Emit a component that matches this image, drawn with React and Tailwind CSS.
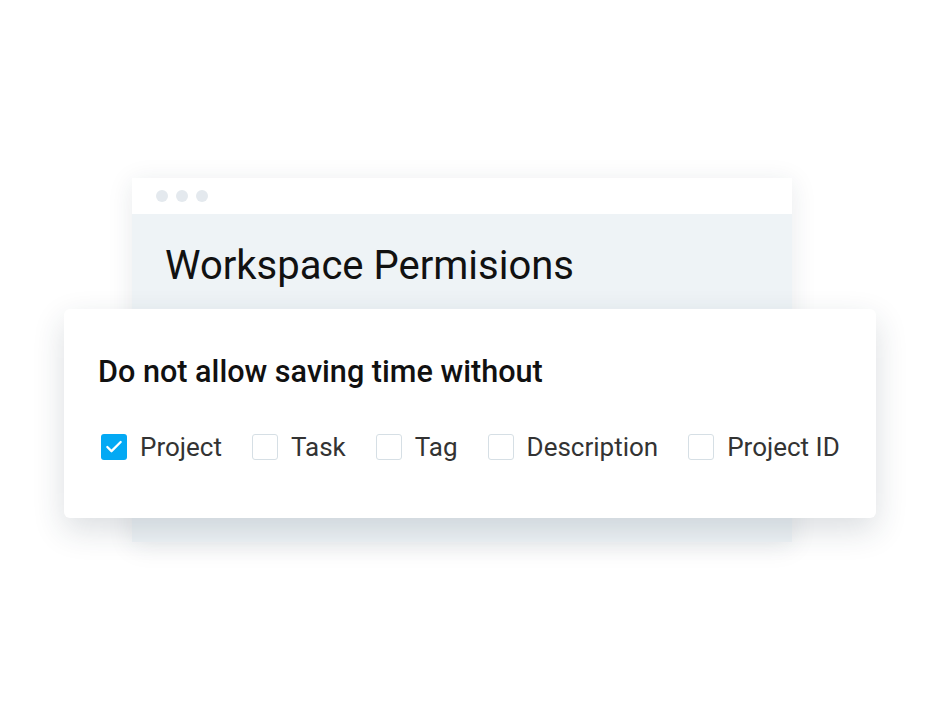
import { Check } from 'lucide-react';

const options = [
  { label: 'Project', checked: true },
  { label: 'Task' },
  { label: 'Tag' },
  { label: 'Description' },
  { label: 'Project ID' },
];

function Box({ checked }) {
  if (checked) {
    return (
      <span className="w-[26px] h-[26px] rounded-[3px] bg-[#03a9f4] flex items-center justify-center flex-shrink-0">
        <Check className="w-[20px] h-[20px] text-white" strokeWidth={2.75} />
      </span>
    );
  }
  return <span className="w-[26px] h-[26px] rounded-[3px] border border-[#d6dfe5] bg-white flex-shrink-0" />;
}

export default function App() {
  return (
    <div
      className="relative w-[940px] h-[720px] bg-white overflow-hidden"
      style={{ fontFamily: 'Roboto, "Noto Sans", sans-serif' }}
    >
      {/* fenêtre du fond */}
      <div className="pt-[178px] pl-[132px]">
        <div className="w-[660px] shadow-[0_4px_24px_rgba(30,50,70,0.10)]">
          <div className="h-[36px] bg-white flex items-center gap-[8px] pl-[24px]">
            <span className="w-[12px] h-[12px] rounded-full bg-[#e4e9ee]" />
            <span className="w-[12px] h-[12px] rounded-full bg-[#e4e9ee]" />
            <span className="w-[12px] h-[12px] rounded-full bg-[#e4e9ee]" />
          </div>
          <div className="h-[328px] bg-[#eef3f6] pl-[33px] pt-[27px]">
            <h1 className="text-[40px] leading-[50px] text-[#111] font-normal">Workspace Permisions</h1>
          </div>
        </div>
      </div>

      {/* carte au-dessus */}
      <div className="absolute left-[64px] top-[309px] w-[812px] h-[209px] bg-white rounded-[6px] shadow-[0_12px_32px_rgba(30,50,70,0.16)] pl-[34px] pt-[44px]">
        <h2 className="text-[30.6px] leading-[38px] font-medium text-[#111]">Do not allow saving time without</h2>
        <div className="flex items-center gap-[30px] mt-[40px] pl-[3px]">
          {options.map((o) => (
            <label key={o.label} className="flex items-center gap-[13px]">
              <Box checked={o.checked} />
              <span className="text-[26px] leading-[32px] text-[#333]">{o.label}</span>
            </label>
          ))}
        </div>
      </div>
    </div>
  );
}
